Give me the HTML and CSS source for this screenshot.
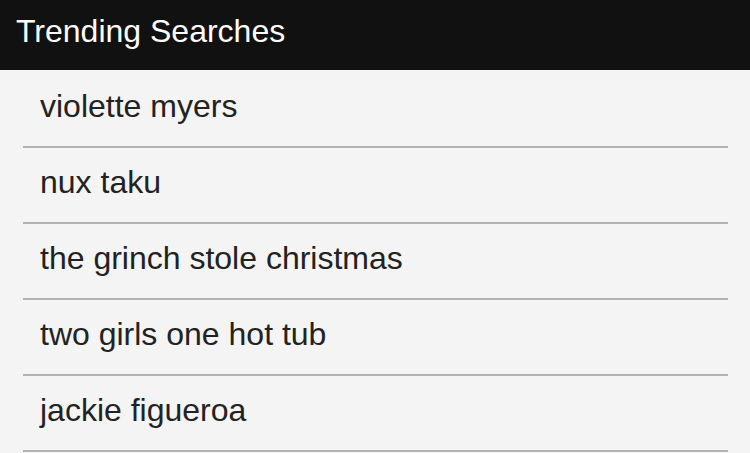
FILE: index.html
```html
<!DOCTYPE html>
<html>
<head>
<meta charset="utf-8">
<link rel="stylesheet" href="styles.css">
</head>
<body>
<header class="topbar">Trending Searches</header>
<ul class="trends">
  <li class="trend">violette myers</li>
  <li class="trend">nux taku</li>
  <li class="trend">the grinch stole christmas</li>
  <li class="trend">two girls one hot tub</li>
  <li class="trend">jackie figueroa</li>
</ul>
</body>
</html>
```
FILE: styles.css
```css
html, body {
  margin: 0;
  padding: 0;
  background: #f4f4f4;
  font-family: "Liberation Sans", Arial, sans-serif;
}
.topbar {
  height: 70px;
  box-sizing: border-box;
  padding: 0 16px;
  line-height: 62px;
  background: #111111;
  color: #ffffff;
  font-size: 32px;
}
.trends {
  list-style: none;
  margin: 0 22px 0 23px;
  padding: 2px 0 0 0;
}
.trend {
  height: 69px;
  line-height: 69px;
  padding: 0 0 5px 17px;
  border-bottom: 2px solid #b2b2b2;
  color: #222222;
  font-size: 32px;
}
```
